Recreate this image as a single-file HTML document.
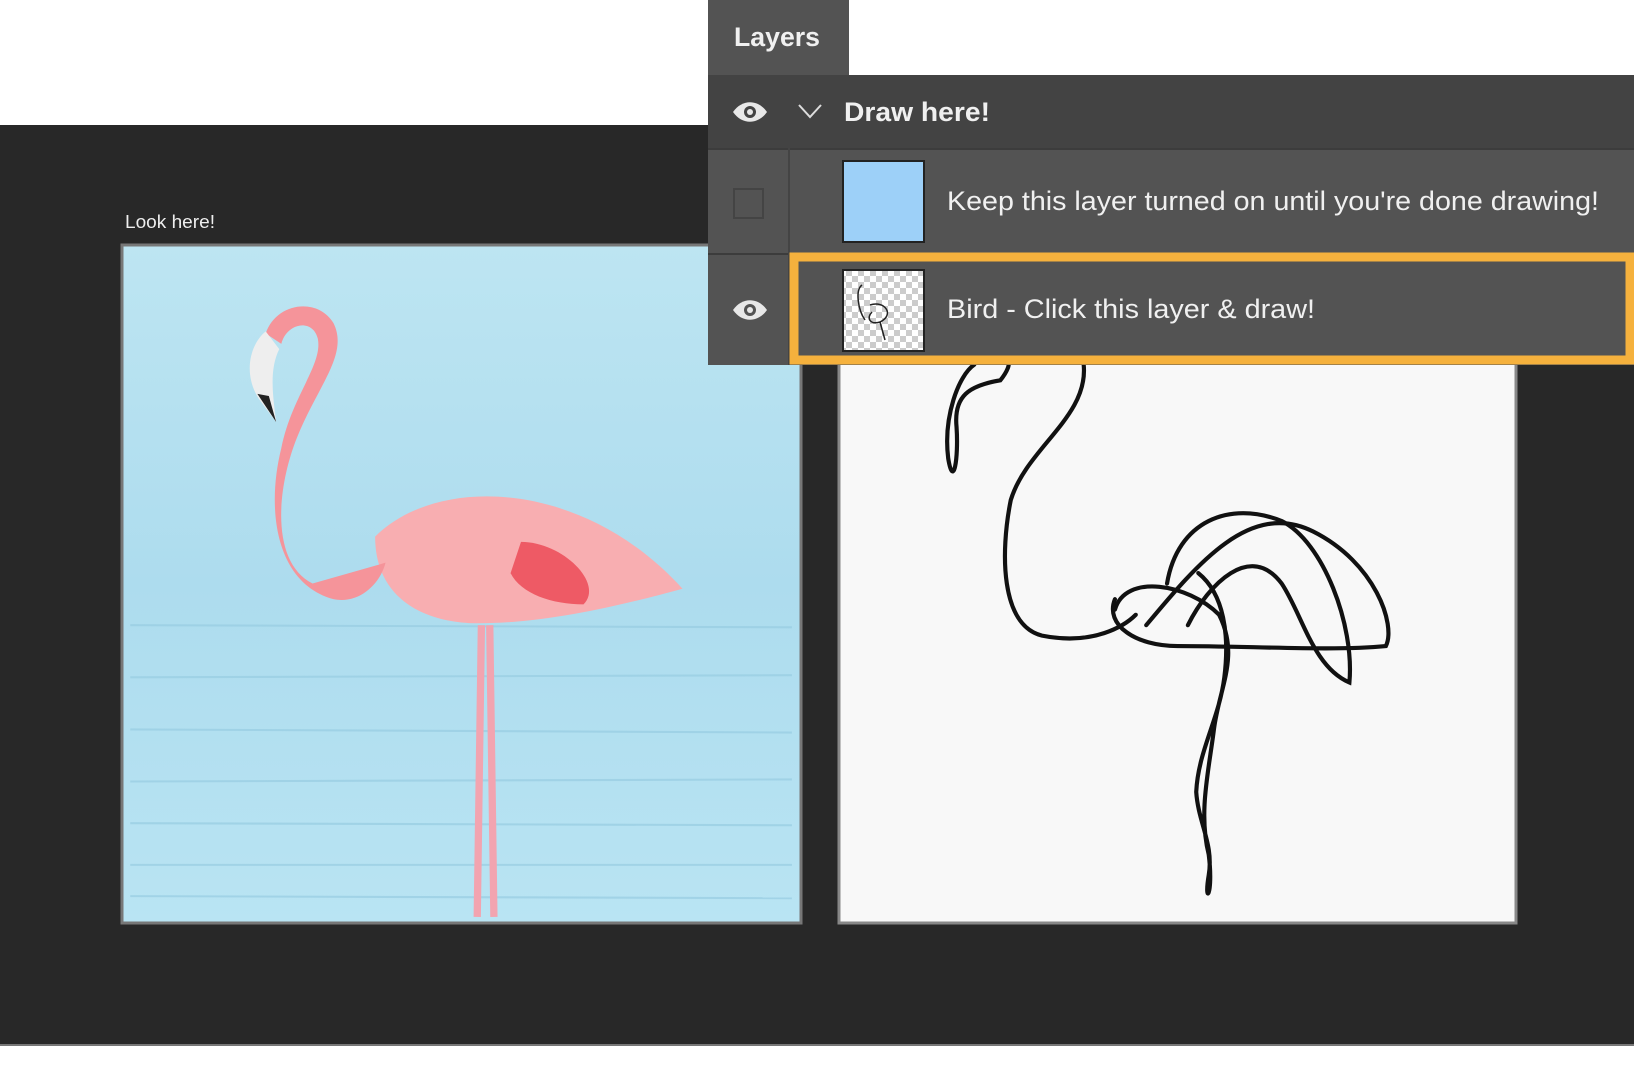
<!DOCTYPE html>
<html><head><meta charset="utf-8"><style>
html,body{margin:0;padding:0;background:#fff;width:1634px;height:1080px;overflow:hidden;font-family:"Liberation Sans",sans-serif}
.abs{position:absolute}
</style></head><body>
<div class="abs" style="left:0;top:125px;width:1634px;height:919px;background:#282828;border-bottom:2px solid #777"></div>
<svg class="abs" style="left:0;top:0" width="1634" height="1080">
 <defs>
  <linearGradient id="w" x1="0" y1="0" x2="0" y2="1">
   <stop offset="0" stop-color="#bde5f2"/><stop offset="0.5" stop-color="#addcee"/><stop offset="1" stop-color="#b9e4f3"/>
  </linearGradient>
  <pattern id="ck" width="12" height="12" patternUnits="userSpaceOnUse"><rect width="12" height="12" fill="#fff"/><rect width="6" height="6" fill="#ccc"/><rect x="6" y="6" width="6" height="6" fill="#ccc"/></pattern>
 </defs>
 <text x="125" y="228" font-size="18" fill="#eee" textLength="90" lengthAdjust="spacingAndGlyphs">Look here!</text>
 <rect x="122" y="245" width="679" height="678" fill="url(#w)" stroke="#777" stroke-width="3"/>
 <g transform="scale(1.042)" >
  <g stroke="#98cde2" stroke-width="2" opacity="0.7">
   <line x1="125" y1="600" x2="760" y2="602"/><line x1="125" y1="650" x2="760" y2="648"/><line x1="125" y1="700" x2="760" y2="703"/><line x1="125" y1="750" x2="760" y2="748"/><line x1="125" y1="790" x2="760" y2="792"/><line x1="125" y1="830" x2="760" y2="830"/><line x1="125" y1="860" x2="760" y2="862"/>
  </g>
  <path d="M462,600 L458,880 M470,600 L474,880" stroke="#f2a4b0" stroke-width="7" fill="none"/>
  <path d="M360,515 C420,455 560,460 655,565 C600,580 520,600 450,598 C400,595 360,570 360,515Z" fill="#f8aeb1"/>
  <path d="M500,520 C540,520 580,560 560,580 C530,580 500,570 490,550Z" fill="#ee5a65"/>
  <path d="M300,560 C260,540 265,470 285,420 C305,370 335,340 320,310 C305,285 265,290 255,320 L270,330 C275,310 300,305 305,325 C310,350 280,380 270,430 C255,490 265,560 320,575 C345,580 365,560 370,540Z" fill="#f5949a"/>
  <path d="M255,318 C240,330 232,360 250,385 L265,405 C262,380 258,355 268,335Z" fill="#eee"/>
  <path d="M247,378 L265,405 L258,380Z" fill="#222"/>
 </g>
 <rect x="839" y="245" width="677" height="678" fill="#f8f8f8" stroke="#888" stroke-width="3"/>
 <g transform="scale(1.042)" fill="none" stroke="#111" stroke-width="4" stroke-linecap="round">
  <path d="M1040,350 C1045,400 985,430 970,480 C960,530 960,600 1000,610 C1050,620 1080,600 1090,590"/>
  <path d="M935,350 C920,360 905,400 910,440 C915,470 920,440 918,410 C915,380 930,370 960,365 C968,355 968,350 968,350"/>
  <path d="M1070,585 C1080,550 1140,560 1170,590 C1190,630 1170,660 1165,700 C1160,740 1150,780 1160,820 C1165,860 1155,870 1160,840 C1165,810 1150,790 1148,760 C1150,720 1170,690 1175,650 C1180,610 1175,570 1150,550"/>
  <path d="M1100,600 C1150,540 1200,480 1260,510 C1320,540 1340,600 1330,620 C1280,625 1200,620 1130,620 C1090,620 1060,600 1070,575"/>
  <path d="M1120,560 C1130,500 1180,480 1230,500 C1270,520 1300,600 1295,655 C1260,640 1250,590 1230,560 C1200,520 1160,560 1140,600"/>
 </g>
 <rect x="708" y="0" width="141" height="76" fill="#535353"/>
 <rect x="708" y="75" width="926" height="290" fill="#535353"/>
 <rect x="708" y="75" width="926" height="73" fill="#434343"/>
 <rect x="708" y="148" width="926" height="2" fill="#3c3c3c"/>
 <rect x="708" y="253" width="926" height="2" fill="#3c3c3c"/>
 <rect x="788" y="148" width="2" height="217" fill="#444"/>
 <rect x="734" y="189" width="29" height="29" fill="none" stroke="#444" stroke-width="2"/>
 <rect x="843" y="161" width="81" height="81" fill="#9dd0f8" stroke="#222" stroke-width="2"/>
 <rect x="794" y="257" width="836" height="103" fill="none" stroke="#f5b13d" stroke-width="9"/>
 <rect x="843" y="270" width="81" height="81" fill="url(#ck)" stroke="#222" stroke-width="2"/>
 <path d="M862,285 C855,290 858,310 865,320 M870,305 C885,300 895,315 880,322 C870,325 866,318 872,312 M880,322 L885,340" stroke="#222" stroke-width="1.5" fill="none"/>
 <g fill="#e8e8e8">
  <path d="M733,112 C742,99 758,99 767,112 C758,125 742,125 733,112Z"/>
  <circle cx="750" cy="112" r="6" fill="#434343"/><circle cx="750" cy="112" r="3"/>
  <path d="M733,310 C742,297 758,297 767,310 C758,323 742,323 733,310Z"/>
  <circle cx="750" cy="310" r="6" fill="#535353"/><circle cx="750" cy="310" r="3"/>
 </g>
 <path d="M799,105 L810,117 L821,105" stroke="#ddd" stroke-width="2" fill="none"/>
 <g font-family="Liberation Sans, sans-serif" fill="#f0f0f0">
  <text x="734" y="46" font-size="27" font-weight="bold" textLength="86" lengthAdjust="spacingAndGlyphs">Layers</text>
  <text x="844" y="121" font-size="27" font-weight="bold" textLength="146" lengthAdjust="spacingAndGlyphs">Draw here!</text>
  <text x="947" y="210" font-size="27" textLength="652" lengthAdjust="spacingAndGlyphs">Keep this layer turned on until you're done drawing!</text>
  <text x="947" y="318" font-size="27" textLength="368" lengthAdjust="spacingAndGlyphs">Bird - Click this layer &amp; draw!</text>
 </g>
</svg>
</body></html>
